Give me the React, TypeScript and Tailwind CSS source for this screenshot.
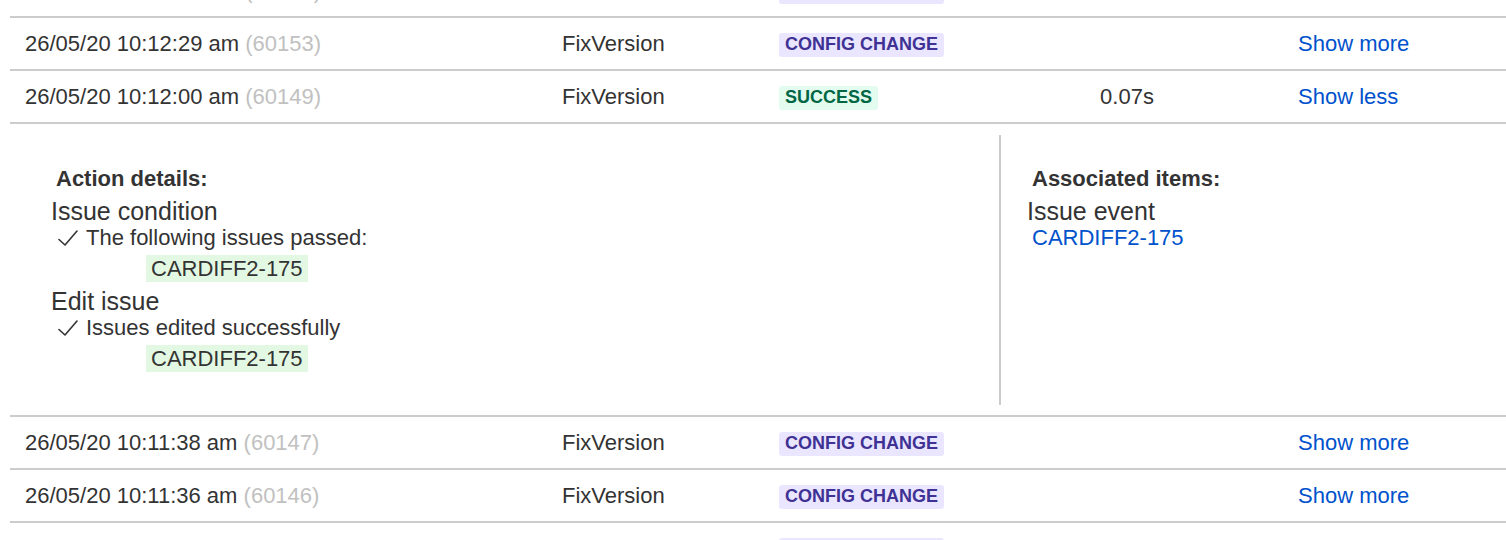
import React from "react";

// Automation audit log: one row expanded to show its action details.

type Row = {
  date: string;
  id: string;
  status: "config" | "success";
  duration?: string;
  expanded?: boolean;
};

const rows: Row[] = [
  { date: "26/05/20 10:12:31 am", id: "60155", status: "config" },
  { date: "26/05/20 10:12:29 am", id: "60153", status: "config" },
  { date: "26/05/20 10:12:00 am", id: "60149", status: "success", duration: "0.07s", expanded: true },
  { date: "26/05/20 10:11:38 am", id: "60147", status: "config" },
  { date: "26/05/20 10:11:36 am", id: "60146", status: "config" },
  { date: "26/05/20 10:11:33 am", id: "60143", status: "config" },
];

function Lozenge({ status }: { status: Row["status"] }) {
  if (status === "success") {
    return (
      <span className="mt-[3px] inline-block h-[24px] rounded-[3px] bg-[#e3fcef] px-[6px] pb-[2px] text-[18px] font-bold leading-[22px] text-[#006644]">
        SUCCESS
      </span>
    );
  }
  return (
    <span className="mt-[3px] inline-block h-[24px] rounded-[3px] bg-[#eae6ff] px-[6px] pb-[2px] text-[18px] font-bold leading-[22px] text-[#403294]">
      CONFIG CHANGE
    </span>
  );
}

function Check() {
  return (
    <svg width="20" height="16" viewBox="0 0 20 16" className="shrink-0">
      <path d="M1 9.5 L7 15 L19 1" fill="none" stroke="#333" strokeWidth="1.6" strokeLinecap="round" strokeLinejoin="round" />
    </svg>
  );
}

function CheckLine({ children }: { children: React.ReactNode }) {
  return (
    <div className="flex h-[26px] items-center pl-[7px] text-[22px] leading-[26px]">
      <Check />
      <span className="ml-[8px]">{children}</span>
    </div>
  );
}

function IssueKey({ children }: { children: React.ReactNode }) {
  return (
    <div className="py-[4px] pl-[95px]">
      <span className="inline-block bg-[#e3f8e3] px-[5px] text-[22px] leading-[27px]">{children}</span>
    </div>
  );
}

function Details() {
  return (
    <div className="border-b-2 border-[#ccc] pt-[11px] pb-[10px]">
      <div className="flex h-[270px]">
        <div className="w-[989px] pl-[41px] pt-[30px]">
          <p className="mb-[4px] pl-[5px] text-[22px] font-bold leading-[28px]">Action details:</p>
          <p className="text-[25px] leading-[28px]">Issue condition</p>
          <CheckLine>The following issues passed:</CheckLine>
          <IssueKey>CARDIFF2-175</IssueKey>
          <p className="text-[25px] leading-[28px]">Edit issue</p>
          <CheckLine>Issues edited successfully</CheckLine>
          <IssueKey>CARDIFF2-175</IssueKey>
        </div>
        <div className="flex-1 border-l-2 border-[#ccc] pl-[26px] pt-[30px]">
          <p className="mb-[4px] pl-[5px] text-[22px] font-bold leading-[28px]">Associated items:</p>
          <p className="text-[25px] leading-[28px]">Issue event</p>
          <a href="#" className="block pl-[5px] text-[22px] leading-[26px] text-[#0052cc]">
            CARDIFF2-175
          </a>
        </div>
      </div>
    </div>
  );
}

function LogRow({ row }: { row: Row }) {
  return (
    <div className="grid h-[53px] grid-cols-[537px_217px_207px_312px_1fr] items-center border-b-2 border-[#ccc] text-[22px] leading-[51px]">
      <div className="pl-[15px] whitespace-nowrap">
        {row.date} <span className="text-[#c1c1c1]">({row.id})</span>
      </div>
      <div className="pl-[15px]">FixVersion</div>
      <div className="flex pl-[15px]">
        <Lozenge status={row.status} />
      </div>
      <div className="text-center">{row.duration}</div>
      <div className="pl-[15px]">
        <a href="#" className="text-[#0052cc]">
          {row.expanded ? "Show less" : "Show more"}
        </a>
      </div>
    </div>
  );
}

export default function App() {
  return (
    <div className="h-[540px] overflow-hidden bg-white font-['Liberation_Sans',Arial,sans-serif] text-[#333]">
      <div className="-mt-[35px] pl-[10px]">
        {rows.map((row) => (
          <React.Fragment key={row.id}>
            <LogRow row={row} />
            {row.expanded && <Details />}
          </React.Fragment>
        ))}
      </div>
    </div>
  );
}
